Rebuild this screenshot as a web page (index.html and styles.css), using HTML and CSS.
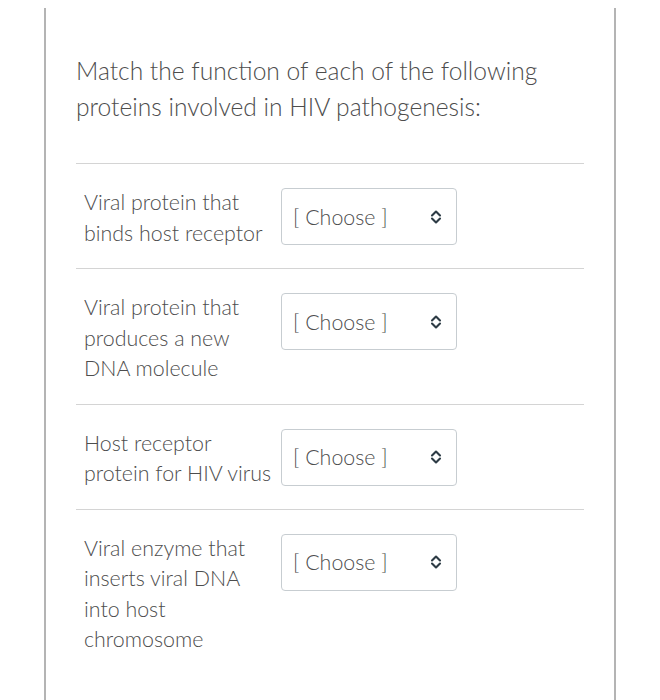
FILE: index.html
```html
<!DOCTYPE html>
<html lang="en">
<head>
<meta charset="utf-8">
<title>Matching question</title>
<link rel="stylesheet" href="styles.css">
</head>
<body>
<div class="card">
  <div class="question">Match the function of each of the following proteins involved in HIV pathogenesis:</div>
  <div class="answers">
    <div class="row">
      <div class="label">Viral protein that binds host receptor</div>
      <div class="select"><span class="select-text">[ Choose ]</span><svg class="chev" width="12" height="16" viewBox="0 0 12 16"><path d="M2 6.5 L6 2.5 L10 6.5 M2 9.5 L6 13.5 L10 9.5" fill="none" stroke="#2d3b45" stroke-width="2.1" stroke-linecap="round" stroke-linejoin="round"/></svg></div>
    </div>
    <div class="row">
      <div class="label">Viral protein that produces a new DNA molecule</div>
      <div class="select"><span class="select-text">[ Choose ]</span><svg class="chev" width="12" height="16" viewBox="0 0 12 16"><path d="M2 6.5 L6 2.5 L10 6.5 M2 9.5 L6 13.5 L10 9.5" fill="none" stroke="#2d3b45" stroke-width="2.1" stroke-linecap="round" stroke-linejoin="round"/></svg></div>
    </div>
    <div class="row">
      <div class="label">Host receptor protein for HIV virus</div>
      <div class="select"><span class="select-text">[ Choose ]</span><svg class="chev" width="12" height="16" viewBox="0 0 12 16"><path d="M2 6.5 L6 2.5 L10 6.5 M2 9.5 L6 13.5 L10 9.5" fill="none" stroke="#2d3b45" stroke-width="2.1" stroke-linecap="round" stroke-linejoin="round"/></svg></div>
    </div>
    <div class="row last">
      <div class="label">Viral enzyme that inserts viral DNA into host chromosome</div>
      <div class="select"><span class="select-text">[ Choose ]</span><svg class="chev" width="12" height="16" viewBox="0 0 12 16"><path d="M2 6.5 L6 2.5 L10 6.5 M2 9.5 L6 13.5 L10 9.5" fill="none" stroke="#2d3b45" stroke-width="2.1" stroke-linecap="round" stroke-linejoin="round"/></svg></div>
    </div>
  </div>
</div>
</body>
</html>
```

FILE: styles.css
```css
html, body {
  margin: 0;
  padding: 0;
  background: #ffffff;
}
body {
  font-family: Lato, "Noto Sans", sans-serif;
  font-weight: 300;
  color: #4d4d4d;
  overflow: hidden;
}
.card {
  margin: 8px 0 0 44px;
  width: 572px;
  min-height: 720px;
  border-left: 2px solid #b4b4b4;
  border-right: 2px solid #b4b4b4;
  padding: 45px 30px 0 30px;
  box-sizing: border-box;
}
.question {
  font-size: 24.6px;
  line-height: 36px;
  padding-right: 20px;
}
.answers {
  margin-top: 38px;
  border-top: 1px solid #d4d4d4;
}
.row {
  display: flex;
  align-items: flex-start;
  padding: 23px 0 20px 8px;
  border-bottom: 1px solid #d4d4d4;
}
.row.last {
  border-bottom: none;
}
.label {
  width: 190px;
  font-size: 21.4px;
  line-height: 30.5px;
}
.select {
  margin: 1px 0 0 7px;
  width: 176px;
  height: 57px;
  box-sizing: border-box;
  border: 1px solid #c7cdd1;
  border-radius: 4px;
  display: flex;
  align-items: center;
  justify-content: space-between;
  padding: 0 14px 0 11px;
}
.select-text {
  font-size: 21.4px;
  color: #4d4d4d;
}
.chev {
  display: block;
}
```
